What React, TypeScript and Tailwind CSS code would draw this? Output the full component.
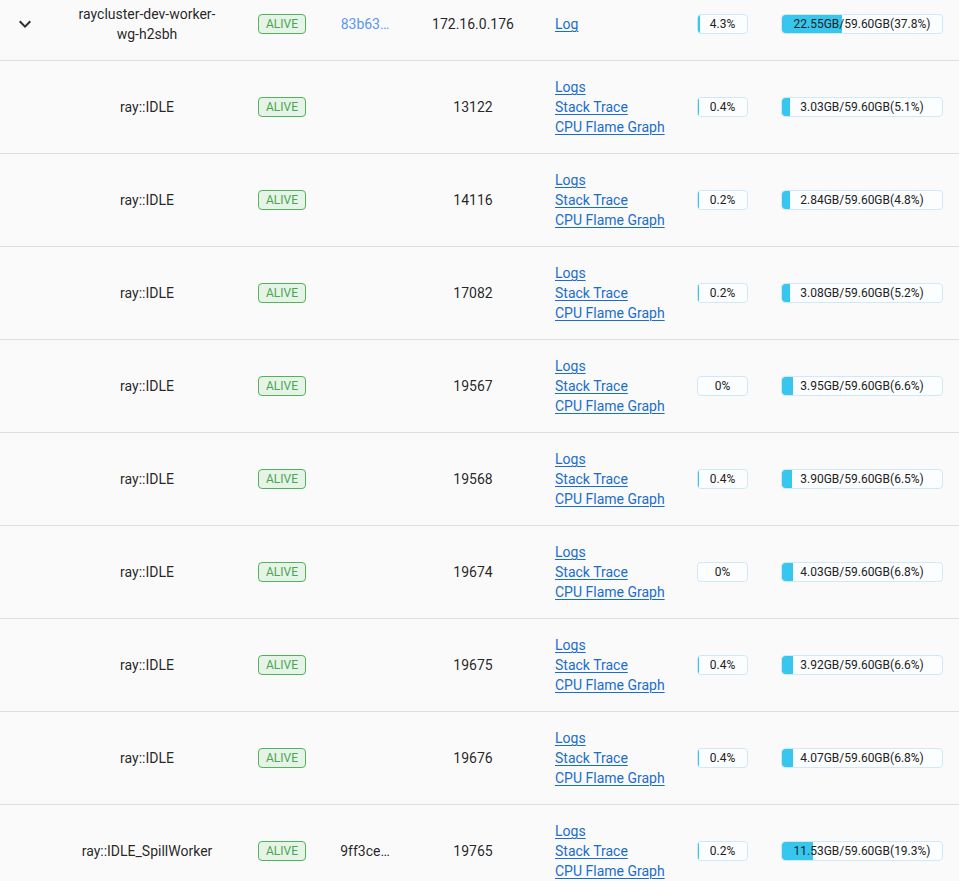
import React from "react";

const font = { fontFamily: "Roboto, 'Liberation Sans', Arial, sans-serif" };

function Badge() {
  return (
    <span className="inline-flex h-[20px] items-center rounded-[4px] border border-[#52b35a] bg-[#e6f4e7] px-[7px] text-[12px] leading-none text-[#4aa551]">
      ALIVE
    </span>
  );
}

function Bar({ pct, label, w }: { pct: number; label: string; w: number }) {
  return (
    <div
      className="relative h-[20px] overflow-hidden rounded-[4px] border border-[#cfe9f6] bg-[#fbfdfe]"
      style={{ width: w }}
    >
      <div
        className="absolute left-0 top-0 h-full rounded-l-[3px] bg-[#37c6ee]"
        style={{ width: `${pct}%` }}
      />
      <div className="relative flex h-full items-center justify-center text-[12px] leading-none text-[#222]">
        {label}
      </div>
    </div>
  );
}

const cols =
  "grid grid-cols-[49px_196px_74px_92px_124px_145px_85px_194px] border-b border-[#e0e0e0]";

function Links({ single }: { single?: boolean }) {
  const cls = "text-[#1a6dcc] underline underline-offset-[2px] decoration-[1px] leading-[20px]";
  if (single) return <a className={cls}>Log</a>;
  return (
    <div className="flex flex-col">
      <a className={cls}>Logs</a>
      <a className={cls}>Stack Trace</a>
      <a className={cls}>CPU Flame Graph</a>
    </div>
  );
}

type W = { name: string; id?: string; pid: string; cpu: string; cpuPct: number; used: string; memPct: number };

const workers: W[] = [
  { name: "ray::IDLE", pid: "13122", cpu: "0.4%", cpuPct: 0.4, used: "3.03GB", memPct: 5.1 },
  { name: "ray::IDLE", pid: "14116", cpu: "0.2%", cpuPct: 0.2, used: "2.84GB", memPct: 4.8 },
  { name: "ray::IDLE", pid: "17082", cpu: "0.2%", cpuPct: 0.2, used: "3.08GB", memPct: 5.2 },
  { name: "ray::IDLE", pid: "19567", cpu: "0%", cpuPct: 0, used: "3.95GB", memPct: 6.6 },
  { name: "ray::IDLE", pid: "19568", cpu: "0.4%", cpuPct: 0.4, used: "3.90GB", memPct: 6.5 },
  { name: "ray::IDLE", pid: "19674", cpu: "0%", cpuPct: 0, used: "4.03GB", memPct: 6.8 },
  { name: "ray::IDLE", pid: "19675", cpu: "0.4%", cpuPct: 0.4, used: "3.92GB", memPct: 6.6 },
  { name: "ray::IDLE", pid: "19676", cpu: "0.4%", cpuPct: 0.4, used: "4.07GB", memPct: 6.8 },
  { name: "ray::IDLE_SpillWorker", id: "9ff3ce…", pid: "19765", cpu: "0.2%", cpuPct: 0.2, used: "11.53GB", memPct: 19.3 },
];

export default function App() {
  return (
    <div
      className="h-[881px] w-[959px] overflow-hidden bg-[#fafafa] text-[14px] leading-[20px] text-[rgba(0,0,0,0.87)]"
      style={font}
    >
      {/* node row */}
      <div className={`${cols} -mt-[12px] py-[16px]`}>
        <div className="flex items-center justify-center pl-[1px]">
          <svg viewBox="0 0 24 24" width="24" height="24" className="fill-[#2e2e2e]">
            <path d="M16.59 8.59 12 13.17 7.41 8.59 6 10l6 6 6-6z" />
          </svg>
        </div>
        <div className="flex items-center justify-center px-[24px] text-center">
          raycluster-dev-worker-wg-h2sbh
        </div>
        <div className="flex items-center justify-center">
          <Badge />
        </div>
        <div className="flex items-center justify-center text-[#5b96f3]">83b63…</div>
        <div className="flex items-center justify-center">172.16.0.176</div>
        <div className="flex items-center pl-[20px]">
          <Links single />
        </div>
        <div className="flex items-center pl-[17px]">
          <Bar pct={4.3} label="4.3%" w={51} />
        </div>
        <div className="flex items-center pl-[16px]">
          <Bar pct={37.8} label="22.55GB/59.60GB(37.8%)" w={162} />
        </div>
      </div>

      {workers.map((w, i) => (
        <div key={i} className={`${cols} py-[16px]`}>
          <div />
          <div className="flex items-center justify-center px-[8px] text-center">{w.name}</div>
          <div className="flex items-center justify-center">
            <Badge />
          </div>
          <div className="flex items-center justify-center">{w.id ?? ""}</div>
          <div className="flex items-center justify-center">{w.pid}</div>
          <div className="flex items-center pl-[20px]">
            <Links />
          </div>
          <div className="flex items-center pl-[17px]">
            <Bar pct={w.cpuPct} label={w.cpu} w={51} />
          </div>
          <div className="flex items-center pl-[16px]">
            <Bar pct={w.memPct} label={`${w.used}/59.60GB(${w.memPct}%)`} w={162} />
          </div>
        </div>
      ))}
    </div>
  );
}
